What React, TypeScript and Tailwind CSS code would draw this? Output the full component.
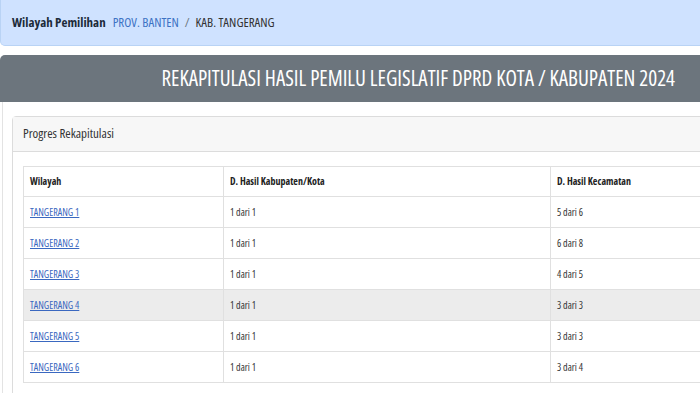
const rows = [
  { name: 'TANGERANG 1', kab: '1 dari 1', kec: '5 dari 6' },
  { name: 'TANGERANG 2', kab: '1 dari 1', kec: '6 dari 8' },
  { name: 'TANGERANG 3', kab: '1 dari 1', kec: '4 dari 5' },
  { name: 'TANGERANG 4', kab: '1 dari 1', kec: '3 dari 3', hover: true },
  { name: 'TANGERANG 5', kab: '1 dari 1', kec: '3 dari 3' },
  { name: 'TANGERANG 6', kab: '1 dari 1', kec: '3 dari 4' },
]

const font = "[font-family:'Open_Sans',sans-serif] [font-stretch:condensed]"

export default function App() {
  return (
    <div className={`h-[393px] w-[700px] overflow-hidden bg-white ${font}`}>
      {/* breadcrumb */}
      <div className="flex h-[46px] w-[720px] items-center gap-[6px] rounded-bl-[5px] border border-t-0 border-[#b9d3f5] bg-[#cfe2ff] pl-[11px] text-[13px]">
        <span className="font-bold text-[#1c2b3a]">Wilayah Pemilihan</span>
        <span className="ml-[1px] text-[#3d72c4]">PROV. BANTEN</span>
        <span className="text-[#6c757d]">/</span>
        <span className="text-[#333]">KAB. TANGERANG</span>
      </div>

      {/* outer card */}
      <div className="mt-[9px] w-[720px]">
        <div className="flex h-[47px] items-center justify-end rounded-tl-[5px] bg-[#6c757d] pr-[45px]">
          <h1 className="text-[21px] font-medium text-white">
            REKAPITULASI HASIL PEMILU LEGISLATIF DPRD KOTA / KABUPATEN 2024
          </h1>
        </div>
        <div className="border-l border-[#e3e3e3] pl-[9px] pt-[14px] ml-[2px]">
          {/* inner card */}
          <div className="rounded-[4px] border border-[#dcdcdc]">
            <div className="flex h-[35px] items-center border-b border-[#dcdcdc] bg-[#f7f7f7] pl-[10px] text-[13px] text-[#333]">
              Progres Rekapitulasi
            </div>
            <div className="px-[10px] pb-[20px] pt-[14px]">
              <table className="w-[800px] border-collapse text-[10px] text-[#333]">
                <thead>
                  <tr className="h-[30px]">
                    <th className="w-[200px] border border-[#e0e0e0] pl-[6px] text-left font-bold text-[#222]">Wilayah</th>
                    <th className="w-[327px] border border-[#e0e0e0] pl-[6px] text-left font-bold text-[#222]">D. Hasil Kabupaten/Kota</th>
                    <th className="border border-[#e0e0e0] pl-[6px] text-left font-bold text-[#222]">D. Hasil Kecamatan</th>
                  </tr>
                </thead>
                <tbody>
                  {rows.map((r) => (
                    <tr key={r.name} className={`h-[31px] ${r.hover ? 'bg-[#ececec]' : ''}`}>
                      <td className="border border-[#e0e0e0] pl-[6px]">
                        <a href="#" className="text-[#3a68c0] underline">{r.name}</a>
                      </td>
                      <td className="border border-[#e0e0e0] pl-[6px]">{r.kab}</td>
                      <td className="border border-[#e0e0e0] pl-[6px]">{r.kec}</td>
                    </tr>
                  ))}
                </tbody>
              </table>
            </div>
          </div>
        </div>
      </div>
    </div>
  )
}
